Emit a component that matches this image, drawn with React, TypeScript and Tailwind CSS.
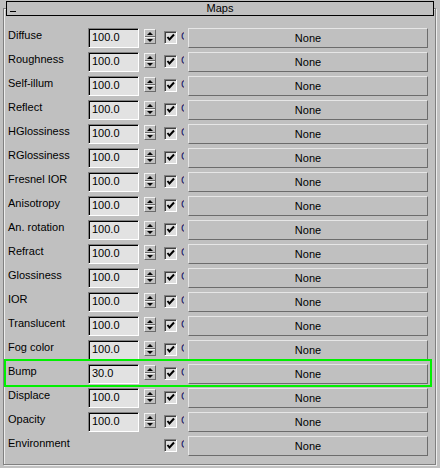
import React from "react";

type MapRow = { name: string; amount: string | null };

const maps: MapRow[] = [
  { name: "Diffuse", amount: "100.0" },
  { name: "Roughness", amount: "100.0" },
  { name: "Self-illum", amount: "100.0" },
  { name: "Reflect", amount: "100.0" },
  { name: "HGlossiness", amount: "100.0" },
  { name: "RGlossiness", amount: "100.0" },
  { name: "Fresnel IOR", amount: "100.0" },
  { name: "Anisotropy", amount: "100.0" },
  { name: "An. rotation", amount: "100.0" },
  { name: "Refract", amount: "100.0" },
  { name: "Glossiness", amount: "100.0" },
  { name: "IOR", amount: "100.0" },
  { name: "Translucent", amount: "100.0" },
  { name: "Fog color", amount: "100.0" },
  { name: "Bump", amount: "30.0" },
  { name: "Displace", amount: "100.0" },
  { name: "Opacity", amount: "100.0" },
  { name: "Environment", amount: null },
];

function Spinner({ hidden }: { hidden?: boolean }) {
  return (
    <div
      className={
        "ml-[5px] mt-[3px] w-[12px] h-[15px] border border-t-[#f2f2f2] border-l-[#f2f2f2] border-b-[#6a6a6a] border-r-[#6a6a6a] bg-[#c0c0c0] " +
        (hidden ? "invisible" : "")
      }
    >
      <svg width="10" height="13" viewBox="0 0 10 13" className="block">
        <polygon points="5,2 2,5 8,5" fill="#000" />
        <line x1="0" y1="6.5" x2="10" y2="6.5" stroke="#6a6a6a" strokeWidth="1" />
        <line x1="0" y1="7.5" x2="10" y2="7.5" stroke="#f2f2f2" strokeWidth="1" />
        <polygon points="2,9 8,9 5,12" fill="#000" />
      </svg>
    </div>
  );
}

function CheckBox() {
  return (
    <div className="ml-[8px] mt-[5px] w-[13px] h-[13px] border border-t-[#808080] border-l-[#808080] border-b-white border-r-white bg-[#dedede] shadow-[inset_1px_1px_0_#404040]">
      <svg width="11" height="11" viewBox="0 0 11 11" className="block">
        <polyline
          points="2.5,5 4.5,7.5 9,2.5"
          fill="none"
          stroke="#000"
          strokeWidth="2"
        />
      </svg>
    </div>
  );
}

function Row({ row }: { row: MapRow }) {
  return (
    <div className="flex items-start h-[24px]">
      <div className="w-[84px] pl-[4px] mt-[3px] whitespace-nowrap">{row.name}</div>
      <div
        className={
          "w-[51px] h-[20px] mt-[2px] border border-t-[#808080] border-l-[#808080] border-b-white border-r-white bg-[#e2e2e2] shadow-[inset_1px_1px_0_#000] pl-[3px] pt-[2px] " +
          (row.amount === null ? "invisible" : "")
        }
      >
        {row.amount ?? "0.0"}
      </div>
      <Spinner hidden={row.amount === null} />
      <CheckBox />
      {/* clipped caption of the map toggle, only its left edge shows */}
      <div className="ml-[4px] mt-[4px] w-[3px] overflow-hidden text-[#1a1a6a]">O</div>
      <div className="ml-[4px] mt-[2px] w-[240px] h-[20px] border border-t-[#e6e6e6] border-l-[#e6e6e6] border-b-[#6c6c6c] border-r-[#6c6c6c] flex items-center justify-center">
        None
      </div>
    </div>
  );
}

export default function App() {
  return (
    <div className="relative w-[440px] h-[468px] bg-[#c0c0c0] pt-[8px] px-[3px] font-['Liberation_Sans',Arial,sans-serif] text-[11px] leading-[13px] text-black">
      <div className="w-[433px] h-[457px] border border-[#808080] shadow-[inset_1px_1px_0_#ececec,1px_1px_0_#ececec] flex flex-col">
        {/* rollout title bar */}
        <div className="-mt-[8px] ml-[2px] w-[428px] h-[15px] border border-black bg-[#c0c0c0] grid grid-cols-[20px_1fr_20px]">
          <div className="pl-[3px] pt-[9px]">
            <div className="w-[6px] h-px bg-black" />
          </div>
          <div className="text-center">Maps</div>
          <div />
        </div>
        <div className="mt-[10px] flex flex-col">
          {maps.map((r) => (
            <Row key={r.name} row={r} />
          ))}
        </div>
      </div>
      {/* selection highlight */}
      <div className="absolute left-[4px] top-[359px] w-[428px] h-[28px] border-2 border-[#00f000]" />
    </div>
  );
}
